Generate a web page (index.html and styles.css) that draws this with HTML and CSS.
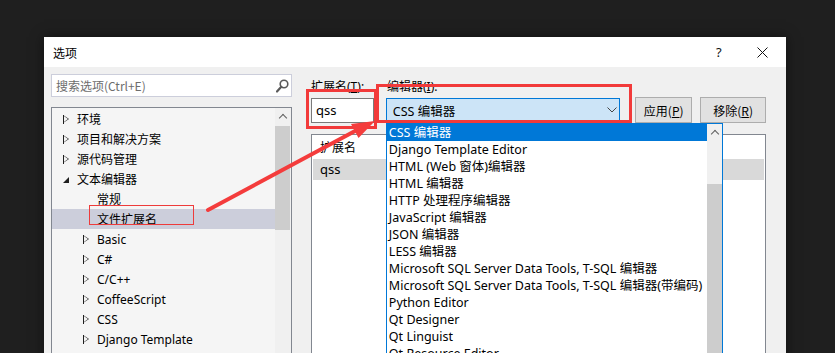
FILE: index.html
```html
<!DOCTYPE html>
<html lang="zh-CN">
<head>
    <meta charset="UTF-8">
    <meta name="viewport" content="width=device-width, initial-scale=1.0">
    <title>选项</title>
    <link rel="stylesheet" href="styles.css">
</head>
<body>
    <div class="dialog">
        <div class="titlebar">
            <span class="title">选项</span>
            <span class="help-btn">?</span>
            <span class="close-btn">
                <svg width="11" height="11" viewBox="0 0 11 11"><path d="M0.5 0.5 L10.5 10.5 M10.5 0.5 L0.5 10.5" stroke="#111" stroke-width="1" fill="none"/></svg>
            </span>
        </div>

        <div class="dialog-body">
            <!-- left side: search + tree -->
            <div class="left-pane">
                <div class="search-box">
                    <span class="search-placeholder">搜索选项(Ctrl+E)</span>
                    <svg class="search-icon" width="13" height="14" viewBox="0 0 13 14">
                        <circle cx="8" cy="5" r="3.8" stroke="#5a5a5a" stroke-width="1.6" fill="none"/>
                        <path d="M5.3 7.8 L1 12.5" stroke="#5a5a5a" stroke-width="2.2" stroke-linecap="round"/>
                    </svg>
                </div>

                <div class="tree">
                    <div class="tree-rows">
                        <div class="tree-row"><span class="arrow collapsed"></span>环境</div>
                        <div class="tree-row"><span class="arrow collapsed"></span>项目和解决方案</div>
                        <div class="tree-row"><span class="arrow collapsed"></span>源代码管理</div>
                        <div class="tree-row"><span class="arrow expanded"></span>文本编辑器</div>
                        <div class="tree-row level2"><span class="arrow none"></span>常规</div>
                        <div class="tree-row level2 selected"><span class="arrow none"></span>文件扩展名</div>
                        <div class="tree-row level2"><span class="arrow collapsed"></span>Basic</div>
                        <div class="tree-row level2"><span class="arrow collapsed"></span>C#</div>
                        <div class="tree-row level2"><span class="arrow collapsed"></span>C/C++</div>
                        <div class="tree-row level2"><span class="arrow collapsed"></span>CoffeeScript</div>
                        <div class="tree-row level2"><span class="arrow collapsed"></span>CSS</div>
                        <div class="tree-row level2"><span class="arrow collapsed"></span>Django Template</div>
                    </div>
                    <div class="scrollbar tree-scroll">
                        <div class="scroll-up"></div>
                        <div class="scroll-thumb"></div>
                    </div>
                </div>
            </div>

            <!-- right side: extension settings -->
            <div class="right-pane">
                <div class="label-row">
                    <span class="label ext-label">扩展名(<u>T</u>):</span>
                    <span class="label">编辑器(<u>I</u>):</span>
                </div>
                <div class="field-row">
                    <div class="text-input">qss</div>
                    <div class="combo">
                        <span>CSS 编辑器</span>
                        <svg class="chevron" width="10" height="6" viewBox="0 0 10 6"><path d="M0.5 0.5 L5 5 L9.5 0.5" stroke="#444" stroke-width="1" fill="none"/></svg>

                        <div class="dropdown">
                            <div class="dropdown-items">
                                <div class="dropdown-item active">CSS 编辑器</div>
                                <div class="dropdown-item">Django Template Editor</div>
                                <div class="dropdown-item">HTML (Web 窗体)编辑器</div>
                                <div class="dropdown-item">HTML 编辑器</div>
                                <div class="dropdown-item">HTTP 处理程序编辑器</div>
                                <div class="dropdown-item">JavaScript 编辑器</div>
                                <div class="dropdown-item">JSON 编辑器</div>
                                <div class="dropdown-item">LESS 编辑器</div>
                                <div class="dropdown-item">Microsoft SQL Server Data Tools, T-SQL 编辑器</div>
                                <div class="dropdown-item">Microsoft SQL Server Data Tools, T-SQL 编辑器(带编码)</div>
                                <div class="dropdown-item">Python Editor</div>
                                <div class="dropdown-item">Qt Designer</div>
                                <div class="dropdown-item">Qt Linguist</div>
                                <div class="dropdown-item">Qt Resource Editor</div>
                            </div>
                            <div class="scrollbar dropdown-scroll">
                                <div class="scroll-up"></div>
                                <div class="scroll-thumb"></div>
                            </div>
                        </div>
                    </div>
                    <button class="btn apply-btn">应用(<u>P</u>)</button>
                    <button class="btn remove-btn">移除(<u>R</u>)</button>
                </div>

                <div class="ext-list">
                    <div class="ext-header">扩展名</div>
                    <div class="ext-row">qss</div>
                </div>
            </div>
        </div>
    </div>

    <!-- red annotation marks drawn on top of the screenshot -->
    <svg class="annotations" width="835" height="353" viewBox="0 0 835 353">
        <rect x="307.5" y="90.5" width="68" height="37" fill="none" stroke="#f23a3a" stroke-width="3"/>
        <rect x="377.5" y="85.5" width="253" height="36" fill="none" stroke="#f23a3a" stroke-width="3"/>
        <rect x="89.5" y="205.5" width="104" height="19" fill="none" stroke="#ee3b3b" stroke-width="1"/>
        <path d="M208 210 L356 130.5" stroke="#f43c3c" stroke-width="4" stroke-linecap="round"/>
        <polygon points="375,121 358.5,138 351,124" fill="#f43c3c"/>
    </svg>
</body>
</html>
```

FILE: styles.css
```css
body {
    margin: 0;
    width: 835px;
    height: 353px;
    overflow: hidden;
    background-color: #1f1f1f;
    font-family: "Noto Sans", "Noto Sans CJK SC", sans-serif;
    font-size: 12px;
    color: #000;
    position: relative;
}

.dialog {
    margin-left: 44px;
    margin-top: 37px;
    width: 742px;
    height: 330px;
    background-color: #f0f0f0;
    box-shadow: 0 0 12px rgba(0, 0, 0, 0.5);
}

.titlebar {
    height: 30px;
    background-color: #fff;
    display: flex;
    align-items: center;
    padding-left: 9px;
}

.title {
    flex: 1;
    font-family: "Noto Sans CJK SC", sans-serif;
    font-size: 12px;
}

.help-btn {
    width: 12px;
    margin-right: 29px;
    font-size: 13px;
    color: #111;
}

.close-btn {
    width: 11px;
    height: 11px;
    margin-right: 18px;
    display: flex;
}

.dialog-body {
    display: flex;
    gap: 19px;
    padding: 7px 20px 0 7px;
}

/* left pane */
.left-pane {
    width: 241px;
    display: flex;
    flex-direction: column;
}

.search-box {
    height: 21px;
    border: 1px solid #cccedb;
    background-color: #fff;
    display: flex;
    align-items: center;
    padding-left: 4px;
    padding-right: 2px;
}

.search-placeholder {
    flex: 1;
    color: #6d6d6d;
    font-family: "Noto Sans CJK SC", sans-serif;
}

.tree {
    margin-top: 10px;
    height: 260px;
    border: 1px solid #828790;
    background-color: #f5f5f5;
    display: flex;
}

.tree-rows {
    flex: 1;
    padding-top: 1px;
    overflow: hidden;
}

.tree-row {
    height: 20px;
    display: flex;
    align-items: center;
    padding-left: 11px;
    white-space: nowrap;
    font-family: "Noto Sans", "Noto Sans CJK SC", sans-serif;
}

.tree-row.level2 {
    padding-left: 31px;
}

.tree-row.selected {
    background-color: #cccedb;
}

.arrow {
    width: 7px;
    height: 9px;
    margin-right: 7px;
    position: relative;
}

.arrow.collapsed {
    border-left: 1px solid #1e1e1e;
    box-sizing: border-box;
}

.arrow.collapsed::before {
    content: "";
    position: absolute;
    left: -1px;
    top: 0;
    width: 0;
    height: 0;
    border-top: 4.5px solid transparent;
    border-bottom: 4.5px solid transparent;
    border-left: 6px solid #1e1e1e;
}

.arrow.collapsed::after {
    content: "";
    position: absolute;
    left: 0;
    top: 1.5px;
    width: 0;
    height: 0;
    border-top: 3px solid transparent;
    border-bottom: 3px solid transparent;
    border-left: 4px solid #f5f5f5;
}

.arrow.expanded::before {
    content: "";
    position: absolute;
    left: 0;
    top: 2px;
    width: 0;
    height: 0;
    border-left: 6px solid transparent;
    border-bottom: 6px solid #1e1e1e;
}

.scrollbar {
    width: 16px;
    background-color: #f0f0f0;
    display: flex;
    flex-direction: column;
}

.scroll-up {
    height: 18px;
    position: relative;
}

.scroll-up::before {
    content: "";
    position: absolute;
    left: 5px;
    top: 7px;
    width: 5px;
    height: 5px;
    border-left: 1.5px solid #606060;
    border-top: 1.5px solid #606060;
    transform: rotate(45deg);
}

.tree-scroll .scroll-thumb {
    height: 104px;
    margin: 0 1px 0 0;
    background-color: #cdcdcd;
}

/* right pane */
.right-pane {
    width: 455px;
    display: flex;
    flex-direction: column;
}

.label-row {
    height: 23px;
    display: flex;
    align-items: center;
    font-family: "Noto Sans", "Noto Sans CJK SC", sans-serif;
}

.ext-label {
    width: 76px;
}

.field-row {
    display: flex;
    align-items: center;
    height: 26px;
}

.text-input {
    width: 57px;
    height: 23px;
    border: 1px solid #7a7a7a;
    background-color: #fff;
    padding-left: 4px;
    display: flex;
    align-items: center;
    font-size: 13px;
}

.combo {
    position: relative;
    width: 225px;
    height: 23px;
    margin-left: 12px;
    padding-left: 6px;
    border: 1px solid #0078d7;
    background-color: #cce4f7;
    display: flex;
    align-items: center;
    justify-content: space-between;
    padding-right: 2px;
    font-family: "Noto Sans", "Noto Sans CJK SC", sans-serif;
    font-size: 12.5px;
}

.chevron {
    margin-right: 0;
}

.btn {
    height: 26px;
    margin-left: 15px;
    padding: 0;
    background-color: #e1e1e1;
    border: 1px solid #adadad;
    font-family: "Noto Sans CJK SC", sans-serif;
    font-size: 12px;
    color: #000;
}

.apply-btn {
    width: 57px;
}

.remove-btn {
    width: 66px;
    margin-left: 8px;
}

.ext-list {
    margin-top: 11px;
    height: 240px;
    border: 1px solid #828790;
    background-color: #fff;
    padding: 0 1px;
}

.ext-header {
    height: 24px;
    line-height: 24px;
    padding-left: 7px;
    font-family: "Noto Sans CJK SC", sans-serif;
}

.ext-row {
    height: 21px;
    line-height: 21px;
    padding-left: 7px;
    background-color: #d9d9d9;
    font-size: 13px;
}

/* dropdown popup over the list */
.dropdown {
    position: absolute;
    left: -1px;
    top: 24px;
    width: 335px;
    height: 240px;
    border: 1px solid #0078d7;
    background-color: #fff;
    display: flex;
    z-index: 5;
}

.dropdown-items {
    flex: 1;
}

.dropdown-item {
    height: 17px;
    line-height: 17px;
    padding-left: 2px;
    white-space: nowrap;
}

.dropdown-item.active {
    background-color: #0078d7;
    color: #fff;
}

.dropdown-scroll {
    width: 15px;
}

.dropdown-scroll .scroll-up {
    height: 60px;
}

.dropdown-scroll .scroll-thumb {
    flex: 1;
    background-color: #cdcdcd;
}

.annotations {
    position: absolute;
    left: 0;
    top: 0;
    pointer-events: none;
    z-index: 10;
}
```
